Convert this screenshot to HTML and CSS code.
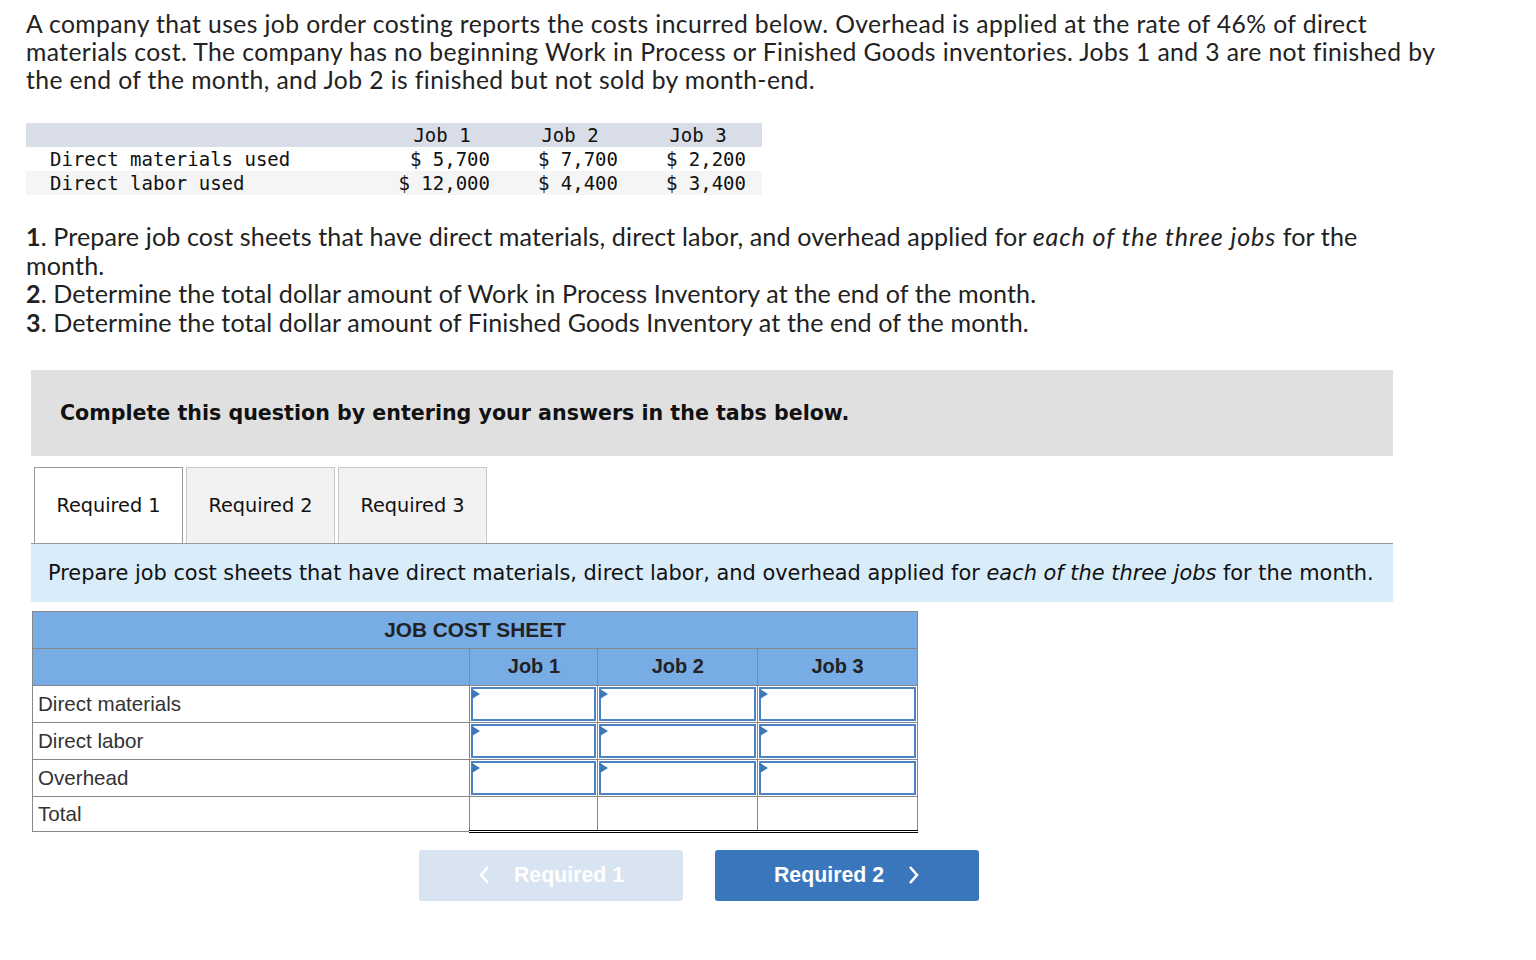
FILE: index.html
```html
<!DOCTYPE html>
<html>
<head>
<meta charset="utf-8">
<link rel="stylesheet" href="styles.css">
</head>
<body>
<div class="page">
  <p class="intro">A company that uses job order costing reports the costs incurred below. Overhead is applied at the rate of 46% of direct<br>materials cost. The company has no beginning Work in Process or Finished Goods inventories. Jobs 1 and 3 are not finished by<br>the end of the month, and Job 2 is finished but not sold by month-end.</p>

  <table class="data">
    <thead>
      <tr><th class="lbl"></th><th>Job 1</th><th>Job 2</th><th>Job 3</th></tr>
    </thead>
    <tbody>
      <tr><td class="lbl">Direct materials used</td><td>$ 5,700</td><td>$ 7,700</td><td>$ 2,200</td></tr>
      <tr class="alt"><td class="lbl">Direct labor used</td><td>$ 12,000</td><td>$ 4,400</td><td>$ 3,400</td></tr>
    </tbody>
  </table>

  <div class="questions">
    <p><b>1</b>. Prepare job cost sheets that have direct materials, direct labor, and overhead applied for <i>each of the three jobs</i> for the<br>month.</p>
    <p><b>2</b>. Determine the total dollar amount of Work in Process Inventory at the end of the month.</p>
    <p><b>3</b>. Determine the total dollar amount of Finished Goods Inventory at the end of the month.</p>
  </div>

  <div class="banner">Complete this question by entering your answers in the tabs below.</div>

  <div class="tabs">
    <div class="tab active">Required 1</div>
    <div class="tab">Required 2</div>
    <div class="tab">Required 3</div>
  </div>
  <div class="instr">Prepare job cost sheets that have direct materials, direct labor, and overhead applied for&nbsp;<i>each of the three jobs</i>&nbsp;for the month.</div>

  <table class="sheet">
    <colgroup><col class="c0"><col class="c1"><col class="c2"><col class="c3"></colgroup>
    <tr class="title"><th colspan="4">JOB COST SHEET</th></tr>
    <tr class="heads"><th></th><th>Job 1</th><th>Job 2</th><th>Job 3</th></tr>
    <tr><td class="name">Direct materials</td><td class="in"><div class="box"></div></td><td class="in"><div class="box"></div></td><td class="in"><div class="box"></div></td></tr>
    <tr><td class="name">Direct labor</td><td class="in"><div class="box"></div></td><td class="in"><div class="box"></div></td><td class="in"><div class="box"></div></td></tr>
    <tr><td class="name">Overhead</td><td class="in"><div class="box"></div></td><td class="in"><div class="box"></div></td><td class="in"><div class="box"></div></td></tr>
    <tr class="total"><td class="name">Total</td><td class="tot"></td><td class="tot"></td><td class="tot"></td></tr>
  </table>

  <div class="nav">
    <button class="btn prev"><svg width="12" height="20" viewBox="0 0 12 20"><path d="M10 2 L3 10 L10 18" fill="none" stroke="#fff" stroke-width="2.6"/></svg><span>Required 1</span></button>
    <button class="btn next"><span>Required 2</span><svg width="12" height="20" viewBox="0 0 12 20"><path d="M2 2 L9 10 L2 18" fill="none" stroke="#fff" stroke-width="2.6"/></svg></button>
  </div>
</div>
</body>
</html>
```
FILE: styles.css
```css
* { box-sizing: border-box; }
body { margin: 0; background: #fff; color: #1a1a1a; }
.page { padding: 10px 0 0 26px; }
.intro {
  margin: 0;
  width: 1500px;
  font-family: Lato, "Open Sans", sans-serif;
  font-size: 24.7px;
  letter-spacing: 0.4px;
  line-height: 28px;
  color: #222;
}
.data {
  margin-top: 29px;
  border-collapse: collapse;
  font-family: "DejaVu Sans Mono", monospace;
  font-size: 19px;
  color: #111;
}
.data th, .data td { height: 24px; padding: 0; line-height: 24px; font-weight: normal; }
.data thead tr { background: #d9dde7; }
.data tr.alt { background: #f5f5f5; }
.data .lbl { width: 352px; text-align: left; padding-left: 24px; }
.data th { width: 128px; text-align: center; }
.data td { width: 128px; text-align: right; padding-right: 16px; }
.data td.lbl { text-align: left; padding-right: 0; }
.questions {
  margin-top: 27px;
  font-family: Lato, "Open Sans", sans-serif;
  font-size: 25.1px;
  letter-spacing: 0.12px;
  line-height: 28.7px;
  color: #222;
  width: 1480px;
}
.questions i { letter-spacing: 0.9px; }
.questions p { margin: 0; }
.banner {
  margin: 33px 0 0 5px;
  width: 1362px;
  height: 86px;
  background: #e0e0e0;
  padding: 0 0 0 29px;
  display: flex;
  align-items: center;
  font-family: "DejaVu Sans", Verdana, sans-serif;
  font-weight: bold;
  font-size: 20.6px;
  color: #111;
}
.tabs {
  margin: 11px 0 0 5px;
  width: 1362px;
  display: flex;
  gap: 3px;
  padding-left: 3px;
  border-bottom: 1px solid #999;
}
.tab {
  width: 149px;
  height: 76px;
  background: #f2f2f2;
  border: 1px solid #c8c8c8;
  border-bottom: none;
  display: flex;
  align-items: center;
  justify-content: center;
  font-family: "DejaVu Sans", Verdana, sans-serif;
  font-size: 19.3px;
  color: #111;
}
.tab.active { background: #fff; border-color: #999; }
.instr {
  margin-left: 5px;
  width: 1362px;
  height: 58px;
  background: #d9ecfa;
  padding-left: 17px;
  display: flex;
  align-items: center;
  font-family: "DejaVu Sans", Verdana, sans-serif;
  font-size: 20.9px;
  color: #111;
  white-space: nowrap;
}
.sheet {
  margin: 9px 0 0 6px;
  border-collapse: collapse;
  width: 886px;
  font-family: "Liberation Sans", Arial, sans-serif;
  font-size: 20px;
  color: #333;
}
.c0 { width: 438px; }
.c1 { width: 128px; }
.c2, .c3 { width: 160px; }
.sheet th, .sheet td { border: 1px solid #888; padding: 0; height: 37px; }
.sheet tr.title th, .sheet tr.heads th { background: #78ace4; color: #222; font-weight: bold; text-align: center; }
.sheet tr.title th { font-size: 20.8px; }
.sheet td.name { padding-left: 5px; text-align: left; font-size: 20.6px; }
.sheet tr.total td { height: 35px; }
.sheet td.in { padding: 1px; }
.box { height: 34px; border: 2px solid #4b83c6; background: #fff; position: relative; }
.box::before {
  content: "";
  position: absolute;
  left: -1px; top: 0;
  border-top: 5px solid transparent;
  border-bottom: 5px solid transparent;
  border-left: 8px solid #3d77bd;
}
.sheet tr.total td.tot { border-top: 1px solid #000; border-bottom: 3px double #000; }
.nav {
  margin: 17px 0 0 393px;
  display: flex;
  gap: 32px;
}
.btn {
  width: 264px;
  height: 51px;
  border: none;
  border-radius: 3px;
  display: flex;
  align-items: center;
  justify-content: center;
  gap: 24px;
  font-family: "Liberation Sans", Arial, sans-serif;
  font-weight: bold;
  font-size: 21.3px;
  color: #fff;
  padding: 0;
}
.btn.prev { background: #d8e4f1; color: #fff; }
.btn.next { background: #3a76bc; }
```
